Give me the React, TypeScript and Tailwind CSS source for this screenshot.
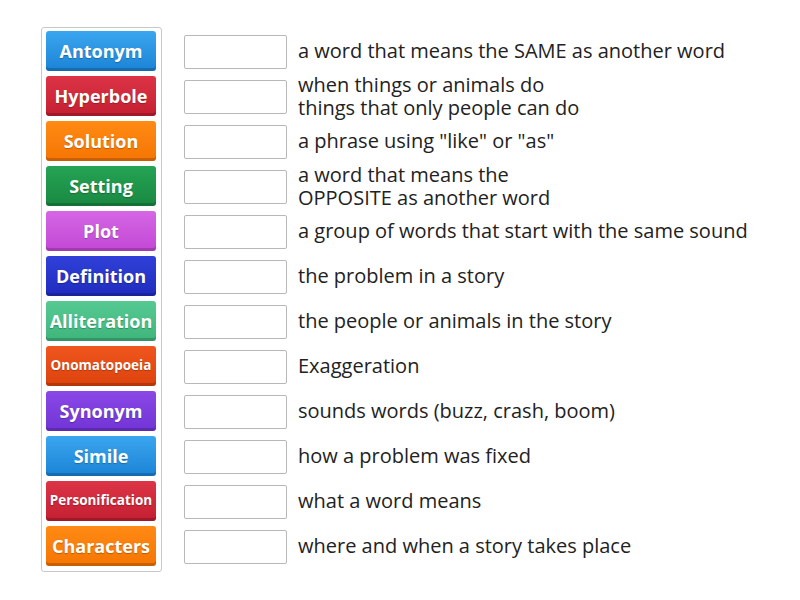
import React from "react";

type Item = { label: string; cls: string; size: string };

const tiles: Item[] = [
  { label: "Antonym", cls: "from-[#3aa6ef] to-[#1b83d6]", size: "text-[18px]" },
  { label: "Hyperbole", cls: "from-[#dc3446] to-[#c41e32]", size: "text-[18px]" },
  { label: "Solution", cls: "from-[#ff8a14] to-[#f57502]", size: "text-[18px]" },
  { label: "Setting", cls: "from-[#24a454] to-[#1a8842]", size: "text-[18px]" },
  { label: "Plot", cls: "from-[#d566e4] to-[#c347d6]", size: "text-[18px]" },
  { label: "Definition", cls: "from-[#3040d8] to-[#1f2cbe]", size: "text-[18px]" },
  { label: "Alliteration", cls: "from-[#56c993] to-[#3eb57c]", size: "text-[18px]" },
  { label: "Onomatopoeia", cls: "from-[#f0561e] to-[#dc430c]", size: "text-[13.5px]" },
  { label: "Synonym", cls: "from-[#8a48e6] to-[#7234d6]", size: "text-[18px]" },
  { label: "Simile", cls: "from-[#3aa6ef] to-[#1b83d6]", size: "text-[18px]" },
  { label: "Personification", cls: "from-[#dc3446] to-[#c41e32]", size: "text-[13.5px]" },
  { label: "Characters", cls: "from-[#ff8a14] to-[#f57502]", size: "text-[18px]" },
];

const defs: string[][] = [
  ["a word that means the SAME as another word"],
  ["when things or animals do", "things that only people can do"],
  ['a phrase using "like" or "as"'],
  ["a word that means the", "OPPOSITE as another word"],
  ["a group of words that start with the same sound"],
  ["the problem in a story"],
  ["the people or animals in the story"],
  ["Exaggeration"],
  ["sounds words (buzz, crash, boom)"],
  ["how a problem was fixed"],
  ["what a word means"],
  ["where and when a story takes place"],
];

export default function App() {
  return (
    <div
      className="w-[800px] h-[600px] bg-white flex items-start"
      style={{ fontFamily: '"Open Sans", "Noto Sans", sans-serif' }}
    >
      <div className="ml-[41px] mt-[27px] w-[121px] border border-[#c8c8c8] rounded-[3px] pt-[3px] pb-[5px] px-[4px] flex flex-col gap-[5px] bg-white">
        {tiles.map((t) => (
          <div
            key={t.label}
            className={`h-[40px] w-[110px] rounded-[3px] bg-gradient-to-b ${t.cls} shadow-[inset_0_-3px_0_rgba(0,0,0,0.18)] flex items-center justify-center text-white font-bold ${t.size} leading-none whitespace-nowrap [text-shadow:0_1px_1px_rgba(0,0,0,0.25)]`}
          >
            <span className="-mt-[1px]">{t.label}</span>
          </div>
        ))}
      </div>
      <div className="ml-[22px] mt-[32px] flex flex-col gap-[5px]">
        {defs.map((d, i) => (
          <div key={i} className="h-[40px] flex items-center">
            <div className="w-[103px] h-[34px] border border-[#b8b8b8] rounded-[2px] bg-white shrink-0" />
            <div className="ml-[11px] -mt-[3px] text-[20px] leading-[23px] text-[#222] whitespace-nowrap">
              {d.map((line, j) => (
                <div key={j}>{line}</div>
              ))}
            </div>
          </div>
        ))}
      </div>
    </div>
  );
}
